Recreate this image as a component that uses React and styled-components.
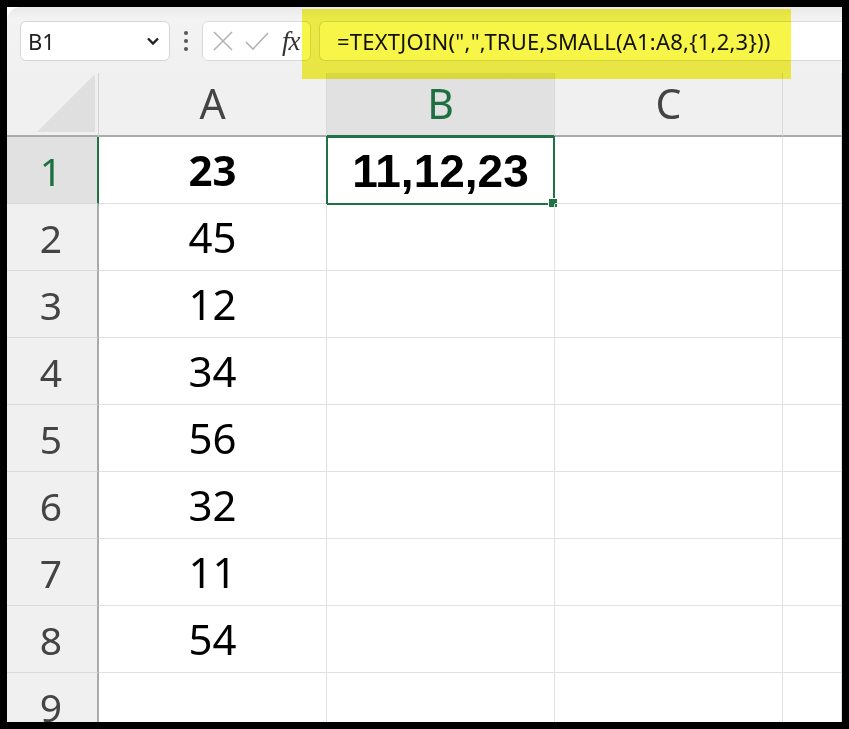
import React from 'react';
import styled, { createGlobalStyle } from 'styled-components';

const GlobalStyle = createGlobalStyle`
	html, body {
		margin: 0;
		padding: 0;
		background: #000;
	}
	* {
		box-sizing: border-box;
	}
`;

const Frame = styled.div`
	position: relative;
	width: 849px;
	height: 729px;
	border: 7px solid #000;
	background: #fff;
	overflow: hidden;
	font-family: 'Noto Sans', 'Open Sans', sans-serif;
	display: flex;
	flex-direction: column;
`;

const Toolbar = styled.div`
	height: 66px;
	flex: none;
	display: flex;
	align-items: flex-start;
	padding: 14px 0 0 13px;
	background: linear-gradient(#e9e9e9 0px, #f3f3f3 12px, #f0f0f0 100%);
	border-top-left-radius: 14px;
`;

const NameBox = styled.div`
	width: 150px;
	height: 40px;
	background: #fff;
	border: 1px solid #d6d6d6;
	border-radius: 6px;
	display: flex;
	align-items: center;
	justify-content: space-between;
	padding: 0 9px 0 7px;
	font-size: 22px;
	color: #222;
`;

const Dots = styled.div`
	width: 32px;
	height: 40px;
	display: flex;
	flex-direction: column;
	align-items: center;
	justify-content: center;
	gap: 4px;
	span {
		width: 4px;
		height: 4px;
		border-radius: 50%;
		background: #555;
	}
`;

const ButtonBox = styled.div`
	width: 109px;
	height: 40px;
	background: #fff;
	border: 1px solid #dadada;
	border-radius: 6px;
	display: flex;
	align-items: center;
	padding-left: 9px;
	gap: 10px;
`;

const Fx = styled.span`
	font-family: 'Liberation Serif', 'DejaVu Serif', serif;
	font-style: italic;
	font-size: 27px;
	color: #333;
	margin-left: 2px;
	letter-spacing: -1px;
`;

const FormulaInput = styled.div`
	flex: 1;
	height: 40px;
	margin-left: 8px;
	background: #fff;
	border: 1px solid #dadada;
	border-right: none;
	border-radius: 6px 0 0 6px;
	display: flex;
	align-items: center;
	padding-left: 17px;
	font-size: 22px;
	letter-spacing: 0.22px;
	color: #111;
	white-space: nowrap;
`;

const Highlight = styled.div`
	position: absolute;
	left: 295px;
	top: 2px;
	width: 489px;
	height: 70px;
	background: #f7f548;
	mix-blend-mode: multiply;
	pointer-events: none;
`;

const Grid = styled.div`
	flex: 1;
	display: grid;
	grid-template-columns: 92px 228px 228px 228px 1fr;
	grid-template-rows: 64px repeat(9, 67px);
`;

const Corner = styled.div`
	background: #f0f0f0;
	border-right: 1px solid #d4d4d4;
	border-bottom: 2px solid #ababab;
	position: relative;
	&::after {
		content: '';
		position: absolute;
		right: 3px;
		bottom: 3px;
		width: 0;
		height: 0;
		border-left: 58px solid transparent;
		border-bottom: 58px solid #dfdfdf;
	}
`;

const ColHeader = styled.div`
	background: ${(p) => (p.$active ? '#e1e1e1' : '#f0f0f0')};
	color: ${(p) => (p.$active ? '#1d6f42' : '#444')};
	border-right: 1px solid #d9d9d9;
	border-bottom: 2px solid ${(p) => (p.$active ? '#217346' : '#ababab')};
	display: flex;
	align-items: center;
	justify-content: center;
	padding-bottom: 2px;
	font-size: 41px;
	line-height: 1;
`;

const RowHeader = styled.div`
	background: ${(p) => (p.$active ? '#e1e1e1' : '#f0f0f0')};
	color: ${(p) => (p.$active ? '#1d6f42' : '#444')};
	border-right: 2px solid ${(p) => (p.$active ? '#217346' : '#ababab')};
	border-bottom: 1px solid #dadada;
	display: flex;
	align-items: center;
	justify-content: center;
	padding-right: 2px;
	font-size: 39px;
	line-height: 1;
`;

const Cell = styled.div`
	position: relative;
	border-right: 1px solid #e1e1e1;
	border-bottom: 1px solid #e1e1e1;
	display: flex;
	align-items: center;
	justify-content: center;
	font-size: 42px;
	font-weight: ${(p) => (p.$bold ? 700 : 400)};
	color: #000;
	line-height: 1;
`;

const SelectedCell = styled(Cell)`
	border: 2px solid #217346;
	margin: -1px 0 -1px -1px;
	font-family: 'Liberation Sans', Arial, sans-serif;
	font-weight: 700;
	font-size: 46px;
	&::after {
		content: '';
		position: absolute;
		right: -5px;
		bottom: -5px;
		width: 8px;
		height: 8px;
		background: #217346;
		border: 1px solid #fff;
	}
`;

const values = ['23', '45', '12', '34', '56', '32', '11', '54', ''];

export default function App() {
	return (
		<>
			<GlobalStyle />
			<Frame>
				<Toolbar>
					<NameBox>
						<span>B1</span>
						<svg width="14" height="10" viewBox="0 0 14 10">
							<path d="M2 2.5 L7 7.5 L12 2.5" fill="none" stroke="#222" strokeWidth="2.4" />
						</svg>
					</NameBox>
					<Dots>
						<span />
						<span />
						<span />
					</Dots>
					<ButtonBox>
						<svg width="22" height="22" viewBox="0 0 22 22">
							<path d="M2 2 L20 20 M20 2 L2 20" stroke="#b3b3b3" strokeWidth="1.6" />
						</svg>
						<svg width="26" height="22" viewBox="0 0 26 22">
							<path d="M2 12 L9 19 L24 3" fill="none" stroke="#b3b3b3" strokeWidth="1.6" />
						</svg>
						<Fx>fx</Fx>
					</ButtonBox>
					<FormulaInput>=TEXTJOIN(",",TRUE,SMALL(A1:A8,{'{'}1,2,3{'}'}))</FormulaInput>
				</Toolbar>
				<Grid>
					<Corner />
					<ColHeader>A</ColHeader>
					<ColHeader $active>B</ColHeader>
					<ColHeader>C</ColHeader>
					<ColHeader />
					{values.map((v, i) => (
						<React.Fragment key={i}>
							<RowHeader $active={i === 0}>{i + 1}</RowHeader>
							<Cell $bold={i === 0}>{v}</Cell>
							{i === 0 ? <SelectedCell>11,12,23</SelectedCell> : <Cell />}
							<Cell />
							<Cell />
						</React.Fragment>
					))}
				</Grid>
				<Highlight />
			</Frame>
		</>
	);
}
